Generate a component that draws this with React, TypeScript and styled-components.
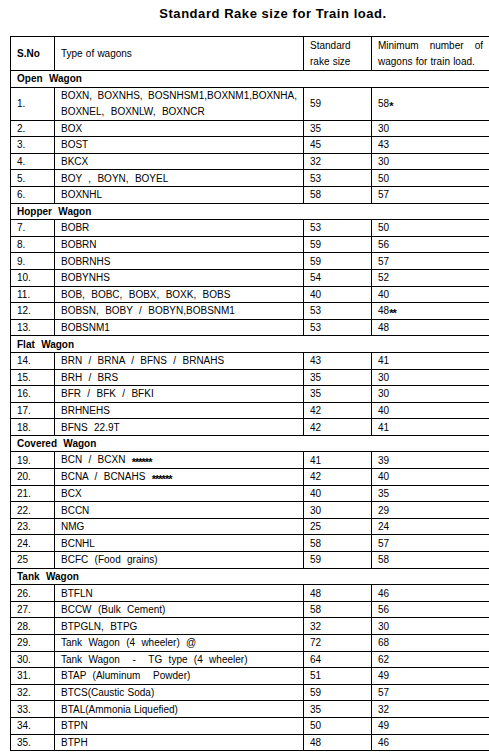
import React from 'react'
import styled, { createGlobalStyle } from 'styled-components'

type Wagon = {
  no: string
  type: string | string[]
  rake: string
  min: string
  typeMark?: string
  minMark?: string
}

type Group = { name: string; rows: Wagon[] }

const groups: Group[] = [
  {
    name: 'Open  Wagon',
    rows: [
      {
        no: '1.',
        type: ['BOXN,  BOXNHS,  BOSNHSM1,BOXNM1,BOXNHA,', 'BOXNEL,  BOXNLW,  BOXNCR'],
        rake: '59',
        min: '58',
        minMark: '*',
      },
      { no: '2.', type: 'BOX', rake: '35', min: '30' },
      { no: '3.', type: 'BOST', rake: '45', min: '43' },
      { no: '4.', type: 'BKCX', rake: '32', min: '30' },
      { no: '5.', type: 'BOY  ,  BOYN,  BOYEL', rake: '53', min: '50' },
      { no: '6.', type: 'BOXNHL', rake: '58', min: '57' },
    ],
  },
  {
    name: 'Hopper  Wagon',
    rows: [
      { no: '7.', type: 'BOBR', rake: '53', min: '50' },
      { no: '8.', type: 'BOBRN', rake: '59', min: '56' },
      { no: '9.', type: 'BOBRNHS', rake: '59', min: '57' },
      { no: '10.', type: 'BOBYNHS', rake: '54', min: '52' },
      { no: '11.', type: 'BOB,  BOBC,  BOBX,  BOXK,  BOBS', rake: '40', min: '40' },
      { no: '12.', type: 'BOBSN,  BOBY  /  BOBYN,BOBSNM1', rake: '53', min: '48', minMark: '**' },
      { no: '13.', type: 'BOBSNM1', rake: '53', min: '48' },
    ],
  },
  {
    name: 'Flat  Wagon',
    rows: [
      { no: '14.', type: 'BRN  /  BRNA  /  BFNS  /  BRNAHS', rake: '43', min: '41' },
      { no: '15.', type: 'BRH  /  BRS', rake: '35', min: '30' },
      { no: '16.', type: 'BFR  /  BFK  /  BFKI', rake: '35', min: '30' },
      { no: '17.', type: 'BRHNEHS', rake: '42', min: '40' },
      { no: '18.', type: 'BFNS  22.9T', rake: '42', min: '41' },
    ],
  },
  {
    name: 'Covered  Wagon',
    rows: [
      { no: '19.', type: 'BCN  /  BCXN  ', typeMark: '******', rake: '41', min: '39' },
      { no: '20.', type: 'BCNA  /  BCNAHS  ', typeMark: '******', rake: '42', min: '40' },
      { no: '21.', type: 'BCX', rake: '40', min: '35' },
      { no: '22.', type: 'BCCN', rake: '30', min: '29' },
      { no: '23.', type: 'NMG', rake: '25', min: '24' },
      { no: '24.', type: 'BCNHL', rake: '58', min: '57' },
      { no: '25', type: 'BCFC  (Food  grains)', rake: '59', min: '58' },
    ],
  },
  {
    name: 'Tank  Wagon',
    rows: [
      { no: '26.', type: 'BTFLN', rake: '48', min: '46' },
      { no: '27.', type: 'BCCW  (Bulk  Cement)', rake: '58', min: '56' },
      { no: '28.', type: 'BTPGLN,  BTPG', rake: '32', min: '30' },
      { no: '29.', type: 'Tank  Wagon  (4  wheeler)  @', rake: '72', min: '68' },
      { no: '30.', type: 'Tank  Wagon    -    TG  type  (4  wheeler)', rake: '64', min: '62' },
      { no: '31.', type: 'BTAP  (Aluminum    Powder)', rake: '51', min: '49' },
      { no: '32.', type: 'BTCS(Caustic Soda)', rake: '59', min: '57' },
      { no: '33.', type: 'BTAL(Ammonia Liquefied)', rake: '35', min: '32' },
      { no: '34.', type: 'BTPN', rake: '50', min: '49' },
      { no: '35.', type: 'BTPH', rake: '48', min: '46' },
    ],
  },
]

export default function App() {
  return (
    <>
      <GlobalStyle />
      <StyledPage>
        <StyledTitle>Standard Rake size for Train load.</StyledTitle>
        <StyledTable>
          <colgroup>
            <col style={{ width: 44 }} />
            <col style={{ width: 249 }} />
            <col style={{ width: 68 }} />
            <col style={{ width: 118 }} />
          </colgroup>
          <thead>
            <StyledHeadRow>
              <StyledHeadCell $bold>S.No</StyledHeadCell>
              <StyledHeadCell>Type of wagons</StyledHeadCell>
              <StyledHeadCell>
                <StyledLine>Standard</StyledLine>
                <StyledLine>rake size</StyledLine>
              </StyledHeadCell>
              <StyledHeadCell>
                <StyledLine $justify>Minimum number of</StyledLine>
                <StyledLine>wagons for train load.</StyledLine>
              </StyledHeadCell>
            </StyledHeadRow>
          </thead>
          <tbody>
            {groups.map((group) => (
              <React.Fragment key={group.name}>
                <StyledRow>
                  <StyledGroupCell colSpan={4}>{group.name}</StyledGroupCell>
                </StyledRow>
                {group.rows.map((row) => (
                  <StyledRow key={row.no} $tall={Array.isArray(row.type)}>
                    <StyledCell>{row.no}</StyledCell>
                    <StyledCell>
                      {Array.isArray(row.type) ? (
                        row.type.map((line, i) => (
                          <StyledLine key={line} $justify={i < row.type.length - 1}>
                            {line}
                          </StyledLine>
                        ))
                      ) : (
                        <>
                          {row.type}
                          {row.typeMark ? <StyledStars>{row.typeMark}</StyledStars> : null}
                        </>
                      )}
                    </StyledCell>
                    <StyledCell>{row.rake}</StyledCell>
                    <StyledCell>
                      {row.min}
                      {row.minMark ? <StyledStars>{row.minMark}</StyledStars> : null}
                    </StyledCell>
                  </StyledRow>
                ))}
              </React.Fragment>
            ))}
          </tbody>
        </StyledTable>
      </StyledPage>
    </>
  )
}

const GlobalStyle = createGlobalStyle`
  html, body {
    margin: 0;
    padding: 0;
    background: #ffffff;
    color: #000000;
    font-family: "Liberation Sans", Arial, sans-serif;
  }
`

const StyledPage = styled.main`
  width: 489px;
  padding: 6px 0 0 10px;
  box-sizing: border-box;
`

const StyledTitle = styled.h1`
  margin: 0 0 14px 47px;
  font-size: 13px;
  line-height: 16px;
  font-weight: 700;
  letter-spacing: 0.55px;
  text-align: center;
`

const StyledTable = styled.table`
  width: 479px;
  table-layout: fixed;
  border-collapse: collapse;
  font-size: 10px;
  word-spacing: 0.4px;
`

const StyledHeadRow = styled.tr`
  height: 34px;
`

const StyledHeadCell = styled.th<{ $bold?: boolean }>`
  border: 1px solid #000;
  padding: 0 6px;
  text-align: left;
  vertical-align: middle;
  font-weight: ${(p) => (p.$bold ? 700 : 400)};
  line-height: 16px;
`

const StyledRow = styled.tr<{ $tall?: boolean }>`
  height: ${(p) => (p.$tall ? '33px' : '16.6px')};
`

const StyledCell = styled.td`
  border: 1px solid #000;
  padding: 0 6px;
  vertical-align: middle;
  white-space: pre;
  line-height: 13px;
`

const StyledGroupCell = styled(StyledCell)`
  font-weight: 700;
`

const StyledLine = styled.div<{ $justify?: boolean }>`
  line-height: 16px;
  text-align: ${(p) => (p.$justify ? 'justify' : 'left')};
  text-align-last: ${(p) => (p.$justify ? 'justify' : 'left')};
  white-space: ${(p) => (p.$justify ? 'normal' : 'pre')};
`

const StyledStars = styled.span`
  display: inline-block;
  font-size: 11px;
  line-height: 10px;
  font-weight: 700;
  letter-spacing: -1px;
  vertical-align: -3px;
`
